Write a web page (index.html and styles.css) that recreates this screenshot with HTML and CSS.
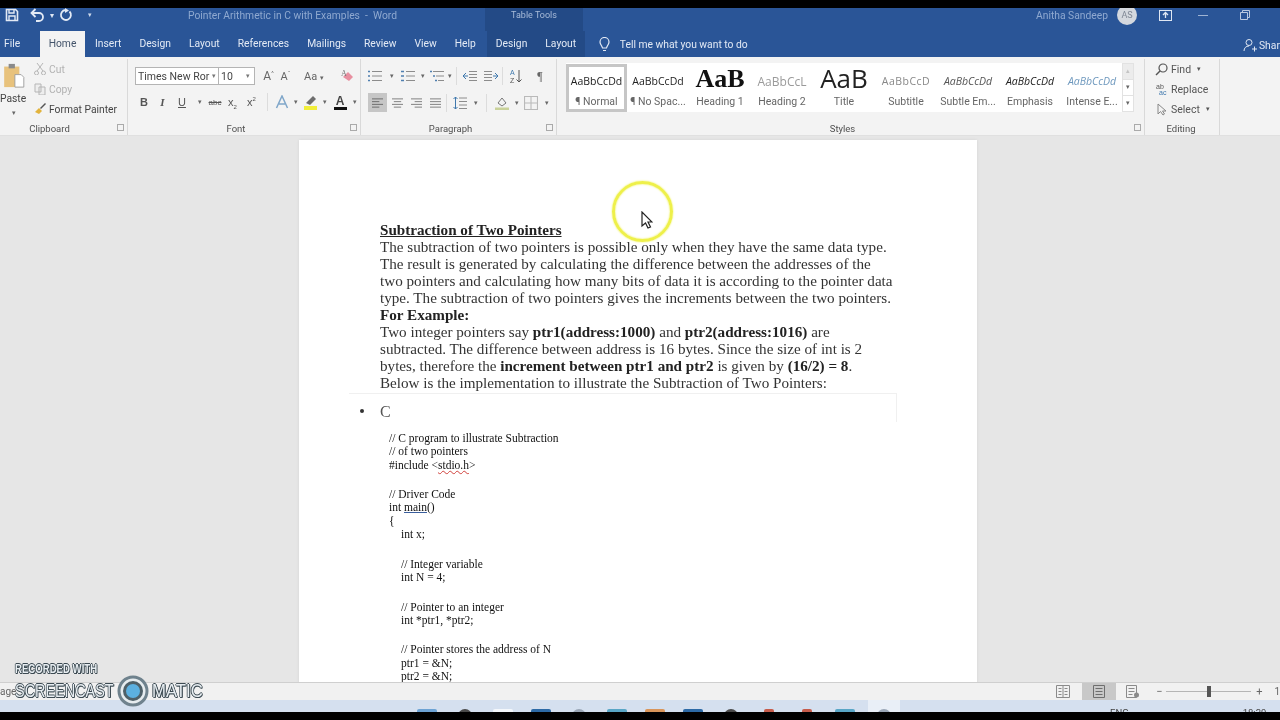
FILE: index.html
```html
<!DOCTYPE html>
<html lang="en">
<head>
    <meta charset="UTF-8">
    <title>Pointer Arithmetic in C with Examples - Word</title>
    <link rel="stylesheet" href="styles.css">
</head>
<body>
    <div class="black-bar top"></div>

    <header class="titlebar">
        <div class="qat">
            <svg class="ic-w" width="14" height="14" viewBox="0 0 14 14"><path d="M1.5 1.5h9l2 2v9h-11z" fill="none" stroke="#e3eaf5" stroke-width="1.6"/><path d="M4 2v3h5V2M4 12V8h6v4" fill="none" stroke="#e3eaf5" stroke-width="1.4"/></svg>
            <svg class="qat-undo" width="15" height="14" viewBox="0 0 15 14"><path d="M2 5h7a4 4 0 0 1 0 8H6" fill="none" stroke="#e3eaf5" stroke-width="1.8"/><path d="M5.500 1 1.500 5l4 4" fill="none" stroke="#e3eaf5" stroke-width="1.8"/></svg>
            <span class="qat-drop">▾</span>
            <svg class="qat-redo" width="14" height="14" viewBox="0 0 14 14"><path d="M10.500 3.500a5 5 0 1 1-4-1.500" fill="none" stroke="#e3eaf5" stroke-width="1.800"/><path d="M6 0v5l4-2.500z" fill="#e3eaf5"/></svg>
            <span class="qat-more">▾</span>
        </div>
        <div class="doc-title">Pointer Arithmetic in C with Examples &nbsp;-&nbsp; Word</div>
        <div class="table-tools">Table Tools</div>
        <div class="user-area">
            <span class="user-name">Anitha Sandeep</span>
            <span class="avatar">AS</span>
            <svg class="win-ribbon" width="13" height="11" viewBox="0 0 13 11"><rect x="0.500" y="0.500" width="12" height="10" fill="none" stroke="#dfe7f3"/><path d="M6.500 8V3M4 5l2.500-2.500L9 5" fill="none" stroke="#dfe7f3" stroke-width="1.300"/></svg>
            <span class="win-min"></span>
            <svg class="win-restore" width="10" height="10" viewBox="0 0 10 10"><path d="M.5 2.500h7v7h-7zM2.500 2.500v-2h7v7h-2" fill="none" stroke="#b9c9e0"/></svg>
        </div>
    </header>

    <nav class="tabs">
        <span class="tab file">File</span>
        <span class="tab active">Home</span>
        <span class="tab">Insert</span>
        <span class="tab">Design</span>
        <span class="tab">Layout</span>
        <span class="tab">References</span>
        <span class="tab">Mailings</span>
        <span class="tab">Review</span>
        <span class="tab">View</span>
        <span class="tab">Help</span>
        <div class="context-tabs">
            <span class="tab">Design</span>
            <span class="tab">Layout</span>
        </div>
        <svg class="bulb" width="11" height="15" viewBox="0 0 11 15"><path d="M3.500 11C3 8.500 1 7.500 1 5a4.500 4.500 0 0 1 9 0c0 2.500-2 3.500-2.500 6zM4 13.500h3" fill="none" stroke="#e3eaf5" stroke-width="1.200"/></svg>
        <span class="tell-me">Tell me what you want to do</span>
        <span class="share">
            <svg width="14" height="14" viewBox="0 0 14 14"><circle cx="6" cy="4.500" r="3" fill="none" stroke="#dfe7f3"/><path d="M1 13c0-3 2-5 5-5M9 11h5M11.500 8.500v5" fill="none" stroke="#dfe7f3"/></svg>
            Shar
        </span>
    </nav>

    <section class="ribbon">
        <div class="group clipboard">
            <div class="group-body clip-body">
                <div class="paste">
                    <svg width="24" height="28" viewBox="0 0 24 28"><rect x="1" y="4" width="17" height="23" fill="#e8c27c"/><rect x="6" y="1" width="7" height="5" fill="#8a8a8a"/><path d="M13 13h7l3 3v11H13z" fill="#fff" stroke="#9a9a9a"/></svg>
                    <span class="paste-name">Paste</span>
                    <span class="caret">▾</span>
                </div>
                <div class="clip-list">
                    <div class="clip-item off">
                        <svg width="12" height="12" viewBox="0 0 12 12"><path d="M3 0l6 8M9 0 3 8" stroke="#b5b5b5" fill="none"/><circle cx="2.500" cy="10" r="2" fill="none" stroke="#b5b5b5"/><circle cx="9.500" cy="10" r="2" fill="none" stroke="#b5b5b5"/></svg>
                        Cut
                    </div>
                    <div class="clip-item off">
                        <svg width="12" height="12" viewBox="0 0 12 12"><path d="M1 1h6v8H1zM5 4h6v8H5z" fill="#eee" stroke="#b5b5b5"/></svg>
                        Copy
                    </div>
                    <div class="clip-item">
                        <svg width="12" height="12" viewBox="0 0 12 12"><path d="M6 5l5-5 1 1-5 5z" fill="#555"/><path d="M1 9l4-4 3 3-3 3z" fill="#e2b33c"/></svg>
                        Format Painter
                    </div>
                </div>
            </div>
            <div class="group-label">Clipboard<i class="launcher"></i></div>
        </div>

        <div class="group font">
            <div class="group-body">
                <div class="font-row1">
                    <div class="font-box name">Times New Ror<span>▾</span></div>
                    <div class="font-box size">10<span>▾</span></div>
                    <span class="grow">A<sup>^</sup></span>
                    <span class="shrink">A<sup>ˇ</sup></span>
                    <span class="case">Aa <em>▾</em></span>
                    <svg class="eraser" width="13" height="14" viewBox="0 0 13 14"><path d="M2 8 7 3l5 5-4 4z" fill="#e88fa0"/><text x="0" y="7" font-size="8" fill="#777" font-family="Liberation Serif">A</text></svg>
                </div>
                <div class="font-row2">
                    <b class="fmt">B</b>
                    <i class="fmt serif">I</i>
                    <u class="fmt">U</u>
                    <span class="caret">▾</span>
                    <s class="fmt small">abc</s>
                    <span class="fmt">x<sub>2</sub></span>
                    <span class="fmt">x<sup>2</sup></span>
                    <span class="vsep"></span>
                    <svg width="14" height="14" viewBox="0 0 14 14"><path d="M1.500 13 7 1l5.500 12M4 9h6" fill="none" stroke="#7fa6c9" stroke-width="1.500"/></svg>
                    <span class="caret">▾</span>
                    <svg width="15" height="15" viewBox="0 0 15 15"><path d="M3 8 10 1l3 3-6 6z" fill="#6d6d6d"/><rect x="1" y="11" width="13" height="4" fill="#f1ee3a"/></svg>
                    <span class="caret">▾</span>
                    <span class="color-a">A</span>
                    <span class="caret">▾</span>
                </div>
            </div>
            <div class="group-label">Font<i class="launcher"></i></div>
        </div>

        <div class="group paragraph">
            <div class="group-body">
                <div class="para-row1">
                    <svg class="lines" viewBox="0 0 14 12"><path d="M4 1.500h10M4 6h10M4 10.500h10" stroke="#8c8c8c"/><path d="M0 1.500h2M0 6h2M0 10.500h2" stroke="#4f7fb0" stroke-width="1.500"/></svg>
                    <span class="caret">▾</span>
                    <svg class="lines" viewBox="0 0 14 12"><path d="M5 1.500h9M5 6h9M5 10.500h9" stroke="#8c8c8c"/><path d="M0 1.500h3M0 6h3M0 10.500h3" stroke="#4f7fb0" stroke-width="1.500"/></svg>
                    <span class="caret">▾</span>
                    <svg class="lines" viewBox="0 0 14 12"><path d="M3 1.500h11M6 6h8M8 10.500h6" stroke="#8c8c8c"/><path d="M0 1.500h2M3 6h2M5 10.500h2" stroke="#4f7fb0" stroke-width="1.500"/></svg>
                    <span class="caret">▾</span>
                    <span class="vsep"></span>
                    <svg class="lines" viewBox="0 0 14 12"><path d="M6 1.500h8M6 4.500h8M6 7.500h8M6 10.500h8" stroke="#8c8c8c"/><path d="M5 6H0M3 3 0 6l3 3" stroke="#3f78ad" fill="none"/></svg>
                    <svg class="lines" viewBox="0 0 14 12"><path d="M0 1.500h8M0 4.500h8M0 7.500h8M0 10.500h8" stroke="#8c8c8c"/><path d="M9 6h5M11 3l3 3-3 3" stroke="#3f78ad" fill="none"/></svg>
                    <span class="vsep"></span>
                    <svg class="lines tall" viewBox="0 0 12 14"><path d="M9 1v12M6.500 10.500 9 13l2.500-2.500" stroke="#555" fill="none"/><text x="0" y="6" font-size="7" fill="#3f78ad" font-family="Liberation Sans">A</text><text x="0" y="13.500" font-size="7" fill="#555" font-family="Liberation Sans">Z</text></svg>
                    <span class="pilcrow">¶</span>
                </div>
                <div class="para-row2">
                    <span class="align sel"><svg class="lines" viewBox="0 0 12 10"><path d="M0 .5h12M0 3.500h8M0 6.500h12M0 9.500h8" stroke="#666"/></svg></span>
                    <span class="align"><svg class="lines" viewBox="0 0 12 10"><path d="M0 .5h12M2 3.500h8M0 6.500h12M2 9.500h8" stroke="#777"/></svg></span>
                    <span class="align"><svg class="lines" viewBox="0 0 12 10"><path d="M0 .5h12M4 3.500h8M0 6.500h12M4 9.500h8" stroke="#777"/></svg></span>
                    <span class="align"><svg class="lines" viewBox="0 0 12 10"><path d="M0 .5h12M0 3.500h12M0 6.500h12M0 9.500h12" stroke="#777"/></svg></span>
                    <span class="vsep"></span>
                    <svg class="lines tall" viewBox="0 0 14 14"><path d="M6 2h8M6 5.500h8M6 9h8M6 12.500h8" stroke="#8c8c8c"/><path d="M2.500 1v12M.5 3l2-2 2 2M.5 11l2 2 2-2" stroke="#3f78ad" fill="none"/></svg>
                    <span class="caret">▾</span>
                    <span class="vsep"></span>
                    <svg class="lines tall" viewBox="0 0 14 14"><path d="M3 7l4-5 4 5-4 3z" fill="none" stroke="#777"/><rect x="0" y="11.500" width="14" height="2.500" fill="#c9d29a"/></svg>
                    <span class="caret">▾</span>
                    <svg class="lines tall" viewBox="0 0 13 13"><path d="M.5.5h12v12H.5zM6.500.5v12M.5 6.500h12" fill="none" stroke="#b9b9b9"/></svg>
                    <span class="caret">▾</span>
                </div>
            </div>
            <div class="group-label">Paragraph<i class="launcher"></i></div>
        </div>

        <div class="group styles-group">
            <div class="group-body gallery-wrap">
                <div class="gallery">
                    <div class="style-item current"><span class="pv">AaBbCcDd</span><span class="nm">¶ Normal</span></div>
                    <div class="style-item"><span class="pv">AaBbCcDd</span><span class="nm">¶ No Spac...</span></div>
                    <div class="style-item"><span class="pv h1">AaB</span><span class="nm">Heading 1</span></div>
                    <div class="style-item"><span class="pv h2">AaBbCcL</span><span class="nm">Heading 2</span></div>
                    <div class="style-item"><span class="pv ttl">AaB</span><span class="nm">Title</span></div>
                    <div class="style-item"><span class="pv sub">AaBbCcD</span><span class="nm">Subtitle</span></div>
                    <div class="style-item"><span class="pv em1">AaBbCcDd</span><span class="nm">Subtle Em...</span></div>
                    <div class="style-item"><span class="pv em2">AaBbCcDd</span><span class="nm">Emphasis</span></div>
                    <div class="style-item"><span class="pv em3">AaBbCcDd</span><span class="nm">Intense E...</span></div>
                </div>
                <div class="scroller">
                    <span class="off">▴</span>
                    <span>▾</span>
                    <span>▾</span>
                </div>
            </div>
            <div class="group-label">Styles<i class="launcher"></i></div>
        </div>

        <div class="group editing">
            <div class="group-body edit-list">
                <div class="edit-item">
                    <svg width="13" height="13" viewBox="0 0 13 13"><circle cx="8" cy="5" r="4" fill="none" stroke="#555" stroke-width="1.200"/><path d="M5 8 1 12" stroke="#555" stroke-width="1.500"/></svg>
                    Find <em>▾</em>
                </div>
                <div class="edit-item">
                    <svg width="13" height="13" viewBox="0 0 13 13"><text x="1" y="6" font-size="7" fill="#555" font-family="Liberation Sans">ab</text><text x="4" y="12" font-size="7" fill="#3f78ad" font-family="Liberation Sans">ac</text></svg>
                    Replace
                </div>
                <div class="edit-item">
                    <svg width="13" height="13" viewBox="0 0 13 13"><path d="M3 1v10l2.500-2.500L8 12l1.500-1-2-3H11z" fill="none" stroke="#888"/></svg>
                    Select <em>▾</em>
                </div>
            </div>
            <div class="group-label">Editing</div>
        </div>
    </section>

    <main class="workspace">
        <article class="page">
            <h3 class="doc-h">Subtraction of Two Pointers</h3>
            <p class="doc-line">The subtraction of two pointers is possible only when they have the same data type.</p>
            <p class="doc-line">The result is generated by calculating the difference between the addresses of the</p>
            <p class="doc-line">two pointers and calculating how many bits of data it is according to the pointer data</p>
            <p class="doc-line">type. The subtraction of two pointers gives the increments between the two pointers.</p>
            <p class="doc-line"><b>For Example:</b></p>
            <p class="doc-line">Two integer pointers say <b>ptr1(address:1000)</b> and <b>ptr2(address:1016)</b> are</p>
            <p class="doc-line">subtracted. The difference between address is 16 bytes. Since the size of int is 2</p>
            <p class="doc-line">bytes, therefore the <b>increment between ptr1 and ptr2</b> is given by <b>(16/2) = 8</b>.</p>
            <p class="doc-line">Below is the implementation to illustrate the Subtraction of Two Pointers:</p>

            <div class="lang-frame">
                <span class="bullet"></span>
                <span class="lang">C</span>
            </div>

            <div class="code">
                <div class="code-block">
                    <div>// C program to illustrate Subtraction</div>
                    <div>// of two pointers</div>
                    <div>#include &lt;<span class="spell">stdio.h</span>&gt;</div>
                </div>
                <div class="code-block">
                    <div>// Driver Code</div>
                    <div>int <span class="grammar">main</span>()</div>
                    <div>{</div>
                    <div class="indent">int x;</div>
                </div>
                <div class="code-block indent">
                    <div>// Integer variable</div>
                    <div>int N = 4;</div>
                </div>
                <div class="code-block indent">
                    <div>// Pointer to an integer</div>
                    <div>int *ptr1, *ptr2;</div>
                </div>
                <div class="code-block indent">
                    <div>// Pointer stores the address of N</div>
                    <div>ptr1 = &amp;N;</div>
                    <div>ptr2 = &amp;N;</div>
                </div>
            </div>
        </article>
    </main>

    <footer class="statusbar">
        <span class="page-info">age</span>
        <div class="views">
            <svg width="14" height="13" viewBox="0 0 14 13"><path d="M.5.5h13v12H.5zM7 .5v12M2.500 3.500h3M2.500 6.500h3M2.500 9.500h3M8.500 3.500h3M8.500 6.500h3M8.500 9.500h3" fill="none" stroke="#8a8a8a"/></svg>
            <span class="view-sel"><svg width="12" height="13" viewBox="0 0 12 13"><path d="M.5.5h11v12H.5zM2.500 3.500h7M2.500 6.500h7M2.500 9.500h7" fill="none" stroke="#6e6e6e"/></svg></span>
            <svg width="14" height="13" viewBox="0 0 14 13"><path d="M.5.5h10v12H.5zM2.500 3.500h6M2.500 6.500h6M2.500 9.500h4" fill="none" stroke="#8a8a8a"/><circle cx="10.500" cy="10" r="2.500" fill="#8a8a8a"/></svg>
        </div>
        <div class="zoom">
            <span class="zoom-btn">−</span>
            <div class="zoom-track"><span class="zoom-thumb"></span></div>
            <span class="zoom-btn">+</span>
            <span class="zoom-val">1</span>
        </div>
    </footer>

    <div class="taskbar">
        <span class="tb-icon blue"></span>
        <span class="tb-icon dark"></span>
        <span class="tb-icon white"></span>
        <span class="tb-icon navy"></span>
        <span class="tb-icon grey"></span>
        <span class="tb-icon teal"></span>
        <span class="tb-icon orange"></span>
        <span class="tb-icon navy"></span>
        <span class="tb-icon dark"></span>
        <span class="tb-icon red"></span>
        <span class="tb-icon red"></span>
        <span class="tb-icon teal"></span>
        <span class="tb-running"><span class="tb-icon grey"></span></span>
        <span class="tb-text eng">ENG</span>
        <span class="tb-text clock">18:29</span>
    </div>
    <div class="black-bar bottom"></div>

    <div class="highlight-ring"></div>
    <svg class="cursor" width="12" height="18" viewBox="0 0 12 18"><path d="M1 1v14l3.500-3 2.500 5 2.500-1-2.500-5H11z" fill="#fff" stroke="#222" stroke-width="1.200"/></svg>

    <div class="watermark">
        <div class="wm-top"><span>RECORDED WITH</span></div>
        <div class="wm-main">
            <span class="wm-screen">SCREENCAST</span>
            <svg class="wm-logo" width="32" height="32" viewBox="0 0 32 32"><circle cx="16" cy="16" r="14" fill="#e6ecef" stroke="#6f828d" stroke-width="3"/><circle cx="16" cy="16" r="10" fill="#4f6068"/><circle cx="16" cy="16" r="7" fill="#5cb0e0"/></svg>
            <span class="wm-matic">MATIC</span>
        </div>
    </div>
</body>
</html>
```

FILE: styles.css
```css
* {
    box-sizing: border-box;
}
body {
    margin: 0;
    width: 1280px;
    height: 720px;
    overflow: hidden;
    display: flex;
    flex-direction: column;
    position: relative;
    background: #000;
    font-family: Roboto, "Open Sans", sans-serif;
    font-size: 10.300px;
    color: #555;
    filter: blur(0.35px);
}
.black-bar.top {
    height: 8px;
    flex: none;
    background: #000;
}
.black-bar.bottom {
    height: 8px;
    flex: none;
    background: #000;
}

/* title bar */
.titlebar {
    height: 23px;
    flex: none;
    overflow: hidden;
    background: #2a5597;
    display: flex;
    align-items: center;
    padding-bottom: 9px;
    color: #8fa9d0;
}
.qat {
    width: 188px;
    display: flex;
    align-items: center;
    padding-left: 5px;
}
.qat-undo {
    margin-left: 11px;
}
.qat-drop {
    width: 13px;
    font-size: 8px;
    color: #dfe7f3;
    text-align: center;
}
.qat-redo {
    margin-left: 1px;
}
.qat-more {
    margin-left: 15px;
    font-size: 7px;
    color: #cfdaeb;
}
.doc-title {
    width: 297px;
    white-space: nowrap;
}
.table-tools {
    width: 98px;
    height: 32px;
    flex: none;
    background: #234a86;
    font-size: 9px;
    text-align: center;
    line-height: 32px;
    color: #a9bcd9;
}
.user-area {
    flex: 1;
    display: flex;
    align-items: center;
    padding-left: 453px;
}
.user-name {
    width: 81px;
    white-space: nowrap;
}
.avatar {
    width: 20px;
    height: 20px;
    border-radius: 50%;
    background: #d4d8de;
    color: #7f8794;
    font-size: 9px;
    text-align: center;
    line-height: 20px;
}
.win-ribbon {
    margin-left: 22px;
}
.win-min {
    width: 10px;
    height: 1px;
    background: #9fb4d3;
    margin-left: 26px;
}
.win-restore {
    margin-left: 32px;
}

/* tabs */
.tabs {
    height: 26px;
    flex: none;
    background: #2a5597;
    display: flex;
    align-items: center;
    color: #e3eaf5;
}
.tab {
    height: 100%;
    padding: 0 9px;
    line-height: 26px;
    white-space: nowrap;
}
.tab.file {
    width: 40px;
    padding: 0 0 0 4px;
}
.tab.active {
    width: 45px;
    padding: 0;
    margin-right: 1px;
    text-align: center;
    background: #f3f3f3;
    color: #44546a;
}
.context-tabs {
    display: flex;
    height: 100%;
    width: 98px;
    margin-left: 2px;
    background: #234a86;
}
.bulb {
    margin-left: 14px;
}
.tell-me {
    margin-left: 10px;
    white-space: nowrap;
}
.share {
    margin-left: auto;
    display: flex;
    align-items: center;
    gap: 2px;
    width: 37px;
    overflow: hidden;
    white-space: nowrap;
    padding-top: 2px;
}

/* ribbon */
.ribbon {
    height: 79px;
    flex: none;
    background: #f3f3f3;
    border-bottom: 1px solid #e0e0e0;
    display: flex;
}
.group {
    position: relative;
    display: flex;
    flex-direction: column;
    flex: none;
    margin-top: 2px;
    border-right: 1px solid #d9d9d9;
}
.group.clipboard {
    width: 128px;
}
.group.font {
    width: 233px;
}
.group.paragraph {
    width: 196px;
}
.group.styles-group {
    width: 588px;
}
.group.editing {
    width: 75px;
}
.group-body {
    flex: 1;
    min-height: 0;
}
.group-label {
    height: 16px;
    line-height: 19px;
    padding-right: 16px;
    text-align: center;
    font-size: 9.500px;
    color: #505050;
    position: relative;
}
.clipboard .group-label {
    padding-right: 28px;
}
.editing .group-label {
    padding-right: 2px;
}
.launcher {
    position: absolute;
    right: 3px;
    top: 5px;
    width: 7px;
    height: 7px;
    border: 1px solid #aaa;
}
.caret {
    font-size: 7px;
    color: #666;
    text-align: center;
}

/* clipboard */
.clip-body {
    display: flex;
}
.paste {
    width: 34px;
    padding: 4px 0 0 2px;
    display: flex;
    flex-direction: column;
    color: #444;
    line-height: 12px;
}
.paste span {
    width: 24px;
    text-align: center;
    white-space: nowrap;
}
.paste-name {
    margin: 5px 0 2px -2px;
}
.clip-list {
    display: flex;
    flex-direction: column;
}
.clip-item {
    height: 20px;
    display: flex;
    align-items: center;
    gap: 3px;
    white-space: nowrap;
    color: #444;
}
.clip-item.off {
    color: #b2b2b2;
}

/* font */
.group.font .group-body {
    padding: 8px 0 0 7px;
}
.font-row1 {
    display: flex;
    align-items: center;
    height: 18px;
}
.font-box {
    height: 18px;
    background: #fff;
    border: 1px solid #b4b4b4;
    color: #444;
    display: flex;
    align-items: center;
    justify-content: space-between;
    padding: 0 2px;
    font-size: 10.500px;
    white-space: nowrap;
}
.font-box span {
    font-size: 7px;
    color: #777;
}
.font-box.name {
    width: 83px;
    border-right: none;
}
.font-box.size {
    width: 37px;
    padding-right: 4px;
}
.grow, .shrink {
    font-size: 12px;
    color: #666;
    width: 17px;
    text-align: center;
}
.grow {
    margin-left: 5px;
}
.shrink {
    font-size: 11px;
}
.grow sup, .shrink sup {
    font-size: 6px;
    line-height: 0;
}
.case {
    margin-left: 10px;
    width: 30px;
    color: #666;
    font-size: 11px;
    white-space: nowrap;
}
.case em {
    font-size: 7px;
    font-style: normal;
}
.eraser {
    margin-left: 7px;
}
.font-row2 {
    margin-top: 8px;
    height: 18px;
    display: grid;
    grid-template-columns: 18px 19px 20px 15px 16px 19px 19px 12px 18px 10px 18px 12px 18px 12px;
    align-items: center;
    justify-items: center;
}
.fmt {
    font-family: "Liberation Sans", sans-serif;
    font-size: 11px;
    color: #555;
}
.fmt sub, .fmt sup {
    font-size: 6px;
    line-height: 0;
}
.fmt.small {
    font-size: 8px;
}
.fmt.serif {
    font-family: "Liberation Serif", serif;
    font-weight: bold;
}
.vsep {
    width: 1px;
    height: 18px;
    background: #dcdcdc;
}
.color-a {
    font: bold 12px/12px "Liberation Sans", sans-serif;
    color: #444;
    border-bottom: 3px solid #111;
    width: 13px;
    text-align: center;
}

/* paragraph */
.group.paragraph .group-body {
    padding: 8px 0 0 3px;
}
.lines {
    width: 14px;
    height: 12px;
}
.lines.tall {
    height: 14px;
}
.para-row1 {
    display: grid;
    height: 18px;
    grid-template-columns: 21px 13px 20px 10px 18px 8px 4px 23px 19px 4px 24px 24px;
    align-items: center;
    justify-items: center;
}
.pilcrow {
    font: 12px "Liberation Serif", serif;
    color: #666;
}
.para-row2 {
    margin-top: 8px;
    padding-left: 4px;
    display: grid;
    height: 19px;
    grid-template-columns: 19px 20px 19px 18px 4px 24px 8px 12px 20px 9px 20px 12px;
    align-items: center;
    justify-items: center;
}
.align {
    width: 19px;
    height: 19px;
    display: flex;
    align-items: center;
    justify-content: center;
}
.align svg {
    width: 11px;
    height: 10px;
}
.align.sel {
    background: #c6c6c6;
}

/* styles gallery */
.gallery-wrap {
    display: flex;
    padding: 4px 0 0 9px;
}
.gallery {
    width: 556px;
    height: 49px;
    background: #fff;
    display: grid;
    grid-template-columns: 61px repeat(8, 62px);
}
.style-item {
    display: flex;
    flex-direction: column;
    align-items: center;
    height: 49px;
    overflow: hidden;
    white-space: nowrap;
}
.style-item.current {
    border: 3px solid #c6c6c6;
    margin-top: 1px;
    height: 48px;
}
.pv {
    height: 32px;
    line-height: 37px;
    font-family: "Open Sans", sans-serif;
    font-size: 10.500px;
    color: #222;
    width: 100%;
    text-align: center;
    overflow: hidden;
}
.current .pv {
    height: 28px;
    line-height: 28px;
}
.pv.h1 {
    font: bold 26px/32px "Liberation Serif", serif;
    color: #111;
}
.pv.h2 {
    color: #9a9a9a;
    font-size: 12px;
}
.pv.ttl {
    font: 26px/30px "Open Sans", sans-serif;
    color: #222;
}
.pv.sub {
    color: #888;
    letter-spacing: 0.5px;
}
.pv.em1 {
    font-style: italic;
    color: #555;
}
.pv.em2 {
    font-style: italic;
    color: #222;
}
.pv.em3 {
    font-style: italic;
    color: #6f99be;
}
.nm {
    color: #666;
    line-height: 14px;
    font-size: 10.500px;
}
.scroller {
    width: 12px;
    height: 49px;
    display: flex;
    flex-direction: column;
    border: 1px solid #e2e2e2;
    background: #fff;
}
.scroller span {
    flex: 1;
    font-size: 7px;
    line-height: 15px;
    text-align: center;
    color: #666;
    border-bottom: 1px solid #e2e2e2;
}
.scroller span.off {
    background: #ececec;
    color: #c4c4c4;
}

/* editing */
.edit-list {
    padding-left: 10px;
}
.edit-item {
    height: 20px;
    display: flex;
    align-items: center;
    gap: 3px;
    color: #555;
    white-space: nowrap;
    font-size: 10.500px;
}
.edit-item em {
    font-style: normal;
    font-size: 7px;
    margin-left: 3px;
}

/* document */
.workspace {
    flex: 1;
    min-height: 0;
    background: #e6e6e6;
    overflow: hidden;
    padding: 4px 0 0 299px;
}
.page {
    width: 678px;
    height: 700px;
    background: #fff;
    box-shadow: 0 0 3px rgba(0, 0, 0, 0.08);
    padding: 81px 0 0 81px;
    font-family: "Liberation Serif", serif;
    font-size: 15.150px;
    line-height: 17px;
    color: #333;
}
.doc-h {
    margin: 0;
    font-size: 15.150px;
    line-height: 17px;
    color: #222;
    text-decoration: underline;
}
.doc-line {
    margin: 0;
    white-space: nowrap;
}
.doc-line b {
    color: #222;
}
.lang-frame {
    margin: 2px 0 0 -31px;
    width: 548px;
    height: 29px;
    border-top: 1px solid #f0f0f0;
    border-right: 1px solid #f0f0f0;
    display: flex;
    align-items: center;
    padding-top: 6px;
}
.bullet {
    width: 4px;
    height: 4px;
    border-radius: 50%;
    background: #333;
    margin-left: 11px;
}
.lang {
    margin-left: 16px;
    font-size: 16px;
    color: #555;
}
.code {
    margin: 10px 0 0 9px;
    font-size: 11.500px;
    line-height: 13.300px;
    color: #111;
}
.code-block {
    margin-bottom: 16.300px;
}
.indent {
    padding-left: 12px;
}
.spell {
    text-decoration: underline wavy #d0413c 1px;
}
.grammar {
    text-decoration: underline #3a5e9c 1px;
}

/* bottom bars */
.statusbar {
    height: 18px;
    flex: none;
    background: #f1f1f1;
    border-top: 1px solid #cfcfcf;
    display: flex;
    align-items: center;
    font-size: 10px;
    color: #666;
}
.page-info {
    width: 1057px;
}
.views {
    display: flex;
    align-items: center;
    width: 93px;
}
.view-sel {
    width: 34px;
    height: 17px;
    background: #c8c8c8;
    margin: 0 10px 0 12px;
    display: flex;
    align-items: center;
    justify-content: center;
}
.zoom {
    flex: 1;
    display: flex;
    align-items: center;
    padding-left: 5px;
}
.zoom-btn {
    width: 10px;
    text-align: center;
    font-size: 11px;
}
.zoom-track {
    width: 85px;
    height: 1px;
    margin: 0 3px 0 2px;
    background: #b5b5b5;
    position: relative;
}
.zoom-thumb {
    position: absolute;
    left: 41px;
    top: -5px;
    width: 4px;
    height: 11px;
    background: #555;
}
.zoom-val {
    margin-left: 10px;
}
.taskbar {
    height: 12px;
    flex: none;
    background: #d5e0ef;
    display: flex;
    overflow: hidden;
    padding-left: 408px;
}
.tb-icon {
    flex: none;
    width: 20px;
    height: 14px;
    margin: 9px 9px 0;
    border-radius: 2px 2px 0 0;
}
.tb-icon.blue { background: #6da3d4; }
.tb-icon.dark { background: #4a4a4a; width: 14px; margin: 9px 12px 0; border-radius: 7px 7px 0 0; }
.tb-icon.white { background: #f4f7fb; }
.tb-icon.navy { background: #2d6aa6; }
.tb-icon.grey { background: #9aa6b6; width: 14px; margin: 9px 12px 0; border-radius: 7px 7px 0 0; }
.tb-icon.teal { background: #59a6c6; }
.tb-icon.orange { background: #d9955a; }
.tb-icon.red { background: #c65c4b; width: 10px; margin: 9px 14px 0; }
.tb-running {
    flex: none;
    width: 32px;
    height: 12px;
    background: #e9eff7;
    margin-left: 4px;
    display: flex;
    justify-content: center;
}
.tb-running .tb-icon {
    margin: 9px 0 0;
}
.tb-text {
    flex: none;
    font-size: 9.500px;
    line-height: 12px;
    padding-top: 7px;
    color: #444;
}
.eng {
    margin-left: 210px;
}
.clock {
    margin-left: 114px;
}

/* overlays from the screen recorder */
.highlight-ring {
    position: absolute;
    left: 612px;
    top: 181px;
    width: 61px;
    height: 61px;
    border: 3px solid #eef04a;
    border-radius: 50%;
    box-shadow: 0 0 2px #eef04a, inset 0 0 2px #eef04a;
}
.cursor {
    position: absolute;
    left: 641px;
    top: 211px;
}
.watermark {
    position: absolute;
    left: 15px;
    top: 663px;
    width: 190px;
    font-family: "Liberation Sans", sans-serif;
    font-weight: bold;
    color: #e8eef2;
    text-shadow: -1px 0 #3c4a52, 1px 0 #3c4a52, 0 -1px #3c4a52, 0 1px #3c4a52, 1px 1px #3c4a52;
}
.wm-top {
    height: 13px;
    font-size: 12px;
    line-height: 13px;
    white-space: nowrap;
}
.wm-top span {
    display: inline-block;
    transform: scaleX(0.8);
    transform-origin: left;
}
.wm-main {
    display: flex;
    align-items: center;
    height: 30px;
    font-size: 19px;
    font-weight: normal;
    white-space: nowrap;
}
.wm-screen {
    width: 102px;
    transform: scaleX(0.76);
    transform-origin: left;
}
.wm-matic {
    margin-left: 3px;
    width: 50px;
    transform: scaleX(0.88);
    transform-origin: left;
}
.wm-logo {
    flex: none;
}
```
